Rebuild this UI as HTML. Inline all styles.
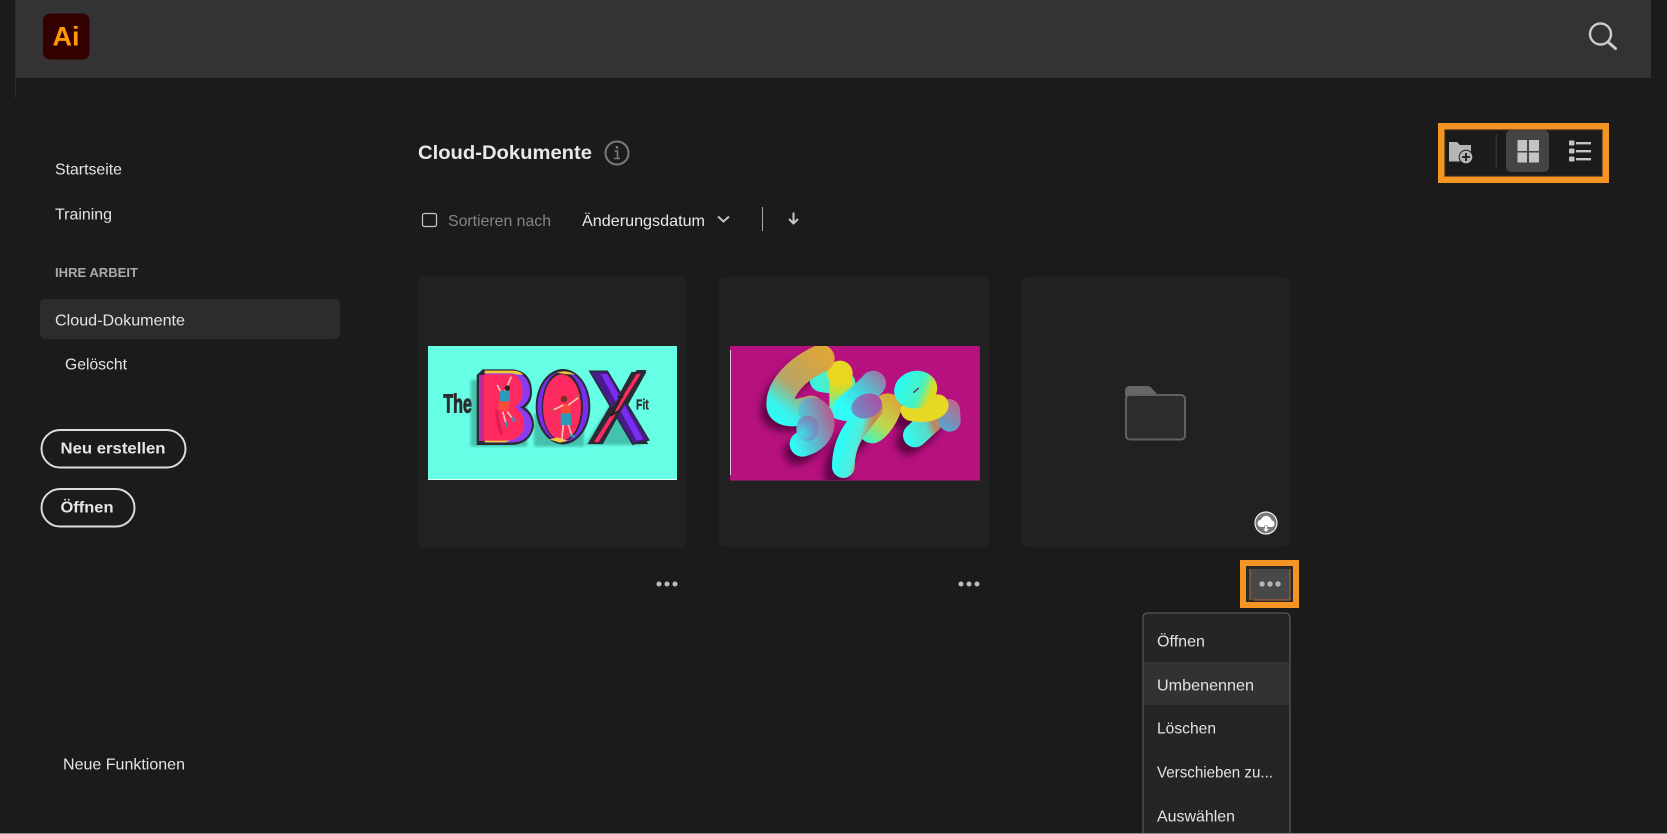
<!DOCTYPE html>
<html lang="de"><head><meta charset="utf-8"><title>Cloud-Dokumente</title>
<style>
html,body{margin:0;padding:0;background:#1b1b1b;width:1667px;height:834px;overflow:hidden}
svg{display:block}
text{font-family:"Liberation Sans",sans-serif;font-size:16px;fill:#e3e3e3}
.b{font-weight:bold}
</style></head><body>
<svg xmlns="http://www.w3.org/2000/svg" width="1667" height="834" viewBox="0 0 1667 834">
<defs>
<filter id="bl" x="-30%" y="-30%" width="160%" height="160%"><feGaussianBlur stdDeviation="11"/></filter>
<filter id="bs" x="-30%" y="-30%" width="160%" height="160%"><feGaussianBlur stdDeviation="4"/></filter>
<linearGradient id="s1" gradientUnits="userSpaceOnUse" x1="320" y1="70" x2="175" y2="260"><stop offset="0" stop-color="#dca63a"/><stop offset=".55" stop-color="#b8a468"/><stop offset=".85" stop-color="#38f2ea"/><stop offset="1" stop-color="#2ffcf4"/></linearGradient>
<linearGradient id="s2" gradientUnits="userSpaceOnUse" x1="225" y1="320" x2="355" y2="270"><stop offset="0" stop-color="#2ffcf4"/><stop offset=".5" stop-color="#62b4cc"/><stop offset="1" stop-color="#b55f90"/></linearGradient>
<linearGradient id="s3" gradientUnits="userSpaceOnUse" x1="375" y1="150" x2="375" y2="250"><stop offset="0" stop-color="#e8d822"/><stop offset=".35" stop-color="#bfe040"/><stop offset="1" stop-color="#2ffcf4"/></linearGradient>
<linearGradient id="s4" gradientUnits="userSpaceOnUse" x1="510" y1="130" x2="400" y2="240"><stop offset="0" stop-color="#a86a9c"/><stop offset=".6" stop-color="#40d8e0"/><stop offset="1" stop-color="#2ffcf4"/></linearGradient>
<linearGradient id="s5" gradientUnits="userSpaceOnUse" x1="360" y1="400" x2="432" y2="420"><stop offset="0" stop-color="#2ffcf4"/><stop offset=".65" stop-color="#52ecdc"/><stop offset="1" stop-color="#c88c50"/></linearGradient>
<linearGradient id="s6" gradientUnits="userSpaceOnUse" x1="555" y1="205" x2="445" y2="335"><stop offset="0" stop-color="#dca038"/><stop offset=".55" stop-color="#c0d84c"/><stop offset="1" stop-color="#30f8d0"/></linearGradient>
<linearGradient id="s7" gradientUnits="userSpaceOnUse" x1="560" y1="140" x2="665" y2="215"><stop offset="0" stop-color="#28fcf4"/><stop offset=".55" stop-color="#48f2c0"/><stop offset=".8" stop-color="#d8dc28"/><stop offset="1" stop-color="#e8d822"/></linearGradient>
<linearGradient id="s8" gradientUnits="userSpaceOnUse" x1="570" y1="330" x2="660" y2="295"><stop offset="0" stop-color="#2ffcf4"/><stop offset=".75" stop-color="#58dcc8"/><stop offset="1" stop-color="#b88868"/></linearGradient>
<linearGradient id="s9" gradientUnits="userSpaceOnUse" x1="680" y1="300" x2="735" y2="225"><stop offset="0" stop-color="#4eaad4"/><stop offset="1" stop-color="#c0688c"/></linearGradient>
<linearGradient id="s10" gradientUnits="userSpaceOnUse" x1="410" y1="240" x2="500" y2="220"><stop offset="0" stop-color="#6a90c8"/><stop offset="1" stop-color="#ad50a0"/></linearGradient>
<linearGradient id="s11" gradientUnits="userSpaceOnUse" x1="275" y1="170" x2="400" y2="130"><stop offset="0" stop-color="#30f4ec"/><stop offset="1" stop-color="#70e8a0"/></linearGradient>
<radialGradient id="s12" gradientUnits="userSpaceOnUse" cx="258" cy="310" r="60"><stop offset="0" stop-color="#40e0e8"/><stop offset=".6" stop-color="#6a9cc8"/><stop offset="1" stop-color="#8a7cb0"/></radialGradient>
</defs>

<!-- page -->
<rect width="1667" height="834" fill="#1b1b1b"/>
<rect x="15" y="0" width="1" height="98" fill="#2a2a2a"/>

<!-- header -->
<rect x="16" y="0" width="1635" height="78" fill="#333"/>
<rect x="43" y="13.500" width="46.500" height="46" rx="7" fill="#330000"/>
<text x="52.500" y="45.500" class="b" style="font-size:27px;fill:#ff9a00" textLength="27" lengthAdjust="spacingAndGlyphs">Ai</text>
<circle cx="1600.500" cy="34" r="10.500" fill="none" stroke="#ccc" stroke-width="2.400"/>
<path d="M1608 42l7.500 6.500" stroke="#ccc" stroke-width="3" stroke-linecap="round"/>

<!-- sidebar -->
<text x="55" y="174.500" textLength="67" lengthAdjust="spacingAndGlyphs">Startseite</text>
<text x="55" y="219.500" textLength="57" lengthAdjust="spacingAndGlyphs">Training</text>
<text x="55" y="277" class="b" style="font-size:12.500px;fill:#aaa" textLength="83" lengthAdjust="spacingAndGlyphs">IHRE ARBEIT</text>
<rect x="40" y="299" width="300" height="40" rx="5" fill="#2c2c2c"/>
<text x="55" y="325.500" textLength="130" lengthAdjust="spacingAndGlyphs">Cloud-Dokumente</text>
<text x="65" y="369.500" textLength="62" lengthAdjust="spacingAndGlyphs">Gelöscht</text>
<rect x="41.500" y="430" width="144" height="37.500" rx="18.700" fill="none" stroke="#dcdcdc" stroke-width="2"/>
<text x="60.500" y="453.500" class="b" style="fill:#e6e6e6" textLength="105" lengthAdjust="spacingAndGlyphs">Neu erstellen</text>
<rect x="41.500" y="489" width="93" height="37.500" rx="18.700" fill="none" stroke="#dcdcdc" stroke-width="2"/>
<text x="60.500" y="512.500" class="b" style="fill:#e6e6e6" textLength="53" lengthAdjust="spacingAndGlyphs">Öffnen</text>
<text x="63" y="769.500" textLength="122" lengthAdjust="spacingAndGlyphs">Neue Funktionen</text>

<!-- title -->
<text x="418" y="159" class="b" style="font-size:19px;fill:#e8e8e8" textLength="174" lengthAdjust="spacingAndGlyphs">Cloud-Dokumente</text>
<circle cx="617" cy="153" r="11.500" fill="none" stroke="#7a7a7a" stroke-width="2"/>
<rect x="615.800" y="146" width="2.400" height="2.600" fill="#7a7a7a"/>
<path d="M614.500 151h3v7M614 158.500h6" fill="none" stroke="#7a7a7a" stroke-width="1.600"/>

<!-- toolbar -->
<rect x="422.500" y="213.500" width="14" height="13" rx="2" fill="none" stroke="#c8c8c8" stroke-width="1.200"/>
<text x="448" y="226" style="fill:#858585" textLength="103" lengthAdjust="spacingAndGlyphs">Sortieren nach</text>
<text x="582" y="226" style="fill:#e8e8e8" textLength="123" lengthAdjust="spacingAndGlyphs">Änderungsdatum</text>
<path d="M718 216.500l5.500 5 5.500-5" fill="none" stroke="#c0c0c0" stroke-width="2"/>
<rect x="762" y="207" width="1" height="24" fill="#aaa"/>
<path d="M793.500 212.500v10M789 219l4.500 4.500 4.500-4.500" fill="none" stroke="#c8c8c8" stroke-width="2"/>

<!-- view switch -->
<rect x="1441.200" y="126.200" width="164.600" height="53.600" fill="none" stroke="#f39423" stroke-width="6.400"/>
<rect x="1444.900" y="129.900" width="157.200" height="46.200" fill="none" stroke="#4a3720" stroke-width=".8"/>
<path d="M1449 142h8l3 3h11v7a8 8 0 0 0-9 9.500h-13z" fill="#b5b5b5"/>
<circle cx="1466" cy="157" r="6.800" fill="#b5b5b5" stroke="#1b1b1b" stroke-width="1"/>
<path d="M1462 157h8M1466 153v8" stroke="#1b1b1b" stroke-width="1.800"/>
<rect x="1495.500" y="134" width="1.500" height="34" fill="#333"/>
<rect x="1506" y="130" width="43" height="42" rx="5" fill="#444"/>
<g fill="#c4c4c4"><rect x="1517.500" y="140" width="9.500" height="11"/><rect x="1529" y="140" width="10" height="11"/><rect x="1517.500" y="152.500" width="9.500" height="10"/><rect x="1529" y="152.500" width="10" height="10"/></g>
<g fill="#c4c4c4"><rect x="1569" y="140.500" width="5.500" height="5" rx="1"/><rect x="1569" y="148.500" width="5.500" height="5" rx="1"/><rect x="1569" y="156.500" width="5.500" height="5" rx="1"/><rect x="1576" y="142" width="15" height="2.400"/><rect x="1576" y="150" width="15" height="2.400"/><rect x="1576" y="158" width="15" height="2.400"/></g>

<!-- cards -->
<rect x="417" y="277" width="270" height="270" rx="5" fill="#212121"/>
<rect x="719" y="277" width="270" height="270" rx="5" fill="#212121"/>
<rect x="1021" y="277" width="269" height="270" rx="5" fill="#212121"/>

<!-- card 1 art -->
<rect x="428" y="346" width="249" height="134" fill="#66ffe6"/>
<rect x="428" y="479" width="249" height="1" fill="#e8fff8"/>
<g transform="translate(410 330) scale(.33333)">
 <text x="100" y="248" textLength="86" lengthAdjust="spacingAndGlyphs" style="font-size:78px;fill:#2b2b2b;stroke:#2b2b2b;stroke-width:3px" class="b">The</text>
 <text x="678" y="238" textLength="38" lengthAdjust="spacingAndGlyphs" style="font-size:44px;fill:#2b2b2b;stroke:#2b2b2b;stroke-width:1px" class="b">Fit</text>
 <g filter="url(#bs)" opacity=".45">
  <path d="M182 150h170v200H182zM372 250h150v100H372zM525 345l100-160 70 160z" fill="#1a7a6c"/>
 </g>
 <!-- B -->
 <text x="212" y="332" textLength="140" lengthAdjust="spacingAndGlyphs" class="b" style="font-size:280px;fill:#2b2b36;stroke:#2b2b36;stroke-width:20px;stroke-linejoin:round">B</text>
 <path d="M200 135L218 118H310Q365 125 366 185Q366 218 344 232Q372 250 372 288Q362 345 300 345H200Z" fill="#2b2b36"/>
 <path d="M225 126H310Q358 132 360 185Q360 216 330 232Q366 250 366 288Q358 338 300 338H225Z" fill="#8a3cf0"/>
 <path d="M222 133H305Q335 136 338 185Q338 215 315 232Q345 250 342 290Q335 330 290 332H222Z" fill="#ff2a60"/>
 <rect x="207" y="135" width="15" height="198" fill="#c02a9a"/>
 <path d="M224 122h88q20 2 28 12l-20 0q-8-4-20-4h-76z" fill="#f0c838"/>
 <path d="M224 332h76l-14 5h-62z" fill="#f0c838"/>
 <path d="M262 165q8 22 20 25l22-50" fill="none" stroke="#f5c8a8" stroke-width="5"/>
 <path d="M268 240l5 40 10 35" stroke="#d8184c" stroke-width="10" fill="none" opacity=".7" transform="translate(-8 0)"/>
 <rect x="270" y="182" width="30" height="34" rx="5" fill="#2a9ab8"/><circle cx="292" cy="174" r="8" fill="#222"/>
 <path d="M266 214h34l-6 30-7 0-10-4-12-2z" fill="#ff4a3a"/>
 <path d="M278 245l10 35M292 245l16 22" stroke="#f5c8a8" stroke-width="5"/>
 <path d="M287 276l3 14M306 262l6 12" stroke="#2a9ab8" stroke-width="8"/>
 <!-- O -->
 <text x="386" y="335" textLength="150" lengthAdjust="spacingAndGlyphs" class="b" style="font-size:300px;fill:#2b2b36;stroke:#2b2b36;stroke-width:8px;stroke-linejoin:round">O</text>
 <ellipse cx="459" cy="230" rx="82" ry="113" fill="#2b2b36"/>
 <ellipse cx="459" cy="230" rx="76" ry="106" fill="#7a2cf0"/>
 <ellipse cx="457" cy="230" rx="62" ry="105" fill="#2b2b36"/>
 <ellipse cx="456" cy="232" rx="57" ry="99" fill="#ff2a60"/>
 <path d="M440 128q30-10 55 6l-30-2z" fill="#f0c838"/><path d="M418 328l32 10 24-6-32-10z" fill="#f0c838"/>
 <circle cx="462" cy="207" r="10" fill="#7a3020"/>
 <rect x="453" y="222" width="28" height="30" rx="4" fill="#ff4a3a"/>
 <rect x="452" y="250" width="32" height="36" rx="4" fill="#2a9ab8"/>
 <path d="M430 240l30-15M475 225l30-22M460 285l-5 48M475 285l10 30" stroke="#f5c8a8" stroke-width="5" fill="none"/>
 <path d="M480 315l15 5" stroke="#2a9ab8" stroke-width="7"/>
 <path d="M420 236l14 10M495 200l14-6" stroke="#d04a50" stroke-width="9"/>
 <!-- X -->
 <text x="534" y="340" textLength="180" lengthAdjust="spacingAndGlyphs" class="b" style="font-size:310px;fill:#2b2b36;stroke:#2b2b36;stroke-width:4px">X</text>
 <path d="M540 124h52l124 206-48 12z" fill="#4a1a90" stroke="#2b2b36" stroke-width="5"/>
 <path d="M572 132h20l108 196-20 4z" fill="#7a2cf0"/>
 <path d="M710 120h-30L535 342h36z" fill="#2b2b36"/>
 <path d="M692 132h-12L552 336h14z" fill="#ff2a60"/>
 <path d="M640 190l-36 68M622 200h18M600 257l28-14" stroke="#222" stroke-width="6" fill="none"/>
</g>

<!-- card 2 art -->
<rect x="730" y="346" width="250" height="135" fill="#b7117f"/>
<rect x="730" y="350" width="1" height="125" fill="#d8d0d8"/>
<rect x="730" y="480" width="250" height="1" fill="#6a2050"/>
<rect x="979" y="346" width="1" height="135" fill="#8a2070"/>
<g transform="translate(715 330) scale(.33333)" fill="none" stroke-linecap="round">
 <clipPath id="cp"><rect x="45" y="48" width="750" height="402"/></clipPath>
 <g clip-path="url(#cp)">
 <g filter="url(#bl)" stroke="#4a0638" stroke-width="76" opacity=".8" transform="translate(-20 22)">
  <path d="M320 85C250 115 195 170 195 222C195 258 270 240 295 240C340 260 325 320 265 345"/>
  <path d="M525 225C480 280 385 310 385 410"/><path d="M600 315L650 275M590 240L690 235"/>
 </g>
 <path d="M320 150L385 160" stroke="url(#s11)" stroke-width="72"/>
 <path d="M378 165L378 235" stroke="url(#s3)" stroke-width="70"/>
 <circle cx="375" cy="130" r="38" fill="#e8d822" stroke="none"/>
 <path d="M318 85C250 115 195 170 195 222C195 258 250 250 288 238" stroke="url(#s1)" stroke-width="82"/>
 <path d="M288 240C335 245 335 325 262 342" stroke="url(#s2)" stroke-width="76"/>
 <ellipse cx="278" cy="295" rx="34" ry="38" fill="url(#s12)" stroke="none"/>
 <path d="M518 232C505 265 490 285 472 298" stroke="url(#s6)" stroke-width="84"/>
 <path d="M470 235C440 275 385 320 385 410" stroke="url(#s5)" stroke-width="68"/>
 <path d="M475 160C450 190 425 205 392 235" stroke="url(#s4)" stroke-width="76"/>
 <ellipse cx="455" cy="228" rx="47" ry="36" fill="url(#s10)" stroke="none" transform="rotate(-20 455 228)"/>
 <path d="M600 316L648 272" stroke="url(#s8)" stroke-width="72"/>
 <path d="M702 240L704 272" stroke="url(#s9)" stroke-width="66"/>
 <path d="M590 240C620 248 660 240 668 226" stroke="#e6d824" stroke-width="66"/>
 <ellipse cx="602" cy="179" rx="65" ry="56" fill="url(#s7)" stroke="none" transform="rotate(-14 602 179)"/>
 <path d="M596 187l14-12" stroke="#7a1860" stroke-width="4"/>
 </g>
</g>

<!-- card 3 folder -->
<path d="M1125 398v-7q0-5 5-5h17q3 0 5 2.500l7 7.500h-34z" fill="#666"/>
<rect x="1126" y="395" width="59" height="44.500" rx="4" fill="#2c2c2c" stroke="#616161" stroke-width="2"/>
<circle cx="1266" cy="523" r="11" fill="#777" stroke="#eee" stroke-width="1.200"/>
<path d="M1261.500 527a3.700 3.700 0 0 1-.5-7.400a5.500 5.500 0 0 1 10.600 .8a3.400 3.400 0 0 1 .6 6.600z" fill="#fff"/>
<path d="M1266 532.500l-3.500-4h2.300v-3h2.400v3h2.300z" fill="#fff" stroke="#777" stroke-width=".6"/>

<!-- more -->
<g fill="#bdbdbd"><circle cx="659" cy="584" r="2.500"/><circle cx="667" cy="584" r="2.500"/><circle cx="675" cy="584" r="2.500"/><circle cx="961" cy="584" r="2.500"/><circle cx="969" cy="584" r="2.500"/><circle cx="977" cy="584" r="2.500"/></g>
<rect x="1243" y="563" width="53" height="42" fill="#2a2a2a" stroke="#f39423" stroke-width="6"/>
<rect x="1250" y="569" width="40" height="31" fill="#484848"/>
<path d="M1250 569v31M1254 600h36M1290 569v31" fill="none" stroke="#b8683a" stroke-width="1"/>
<g fill="#b5b5b5"><circle cx="1262" cy="584" r="2.700"/><circle cx="1270" cy="584" r="2.700"/><circle cx="1278" cy="584" r="2.700"/></g>

<!-- menu -->
<path d="M1143 835V618q0-5 5-5h137q5 0 5 5v217z" fill="#252525" stroke="#555" stroke-width="1.300"/>
<rect x="1144" y="662" width="145" height="43" fill="#323232"/>
<text x="1157" y="646.500" textLength="48" lengthAdjust="spacingAndGlyphs">Öffnen</text>
<text x="1157" y="690.500" textLength="97" lengthAdjust="spacingAndGlyphs">Umbenennen</text>
<text x="1157" y="733.500" textLength="59" lengthAdjust="spacingAndGlyphs">Löschen</text>
<text x="1157" y="777.500" textLength="116" lengthAdjust="spacingAndGlyphs">Verschieben zu...</text>
<text x="1157" y="821.500" textLength="78" lengthAdjust="spacingAndGlyphs">Auswählen</text>
<rect x="0" y="833" width="1667" height="1" fill="#8c8c8c"/>
</svg>
</body></html>
